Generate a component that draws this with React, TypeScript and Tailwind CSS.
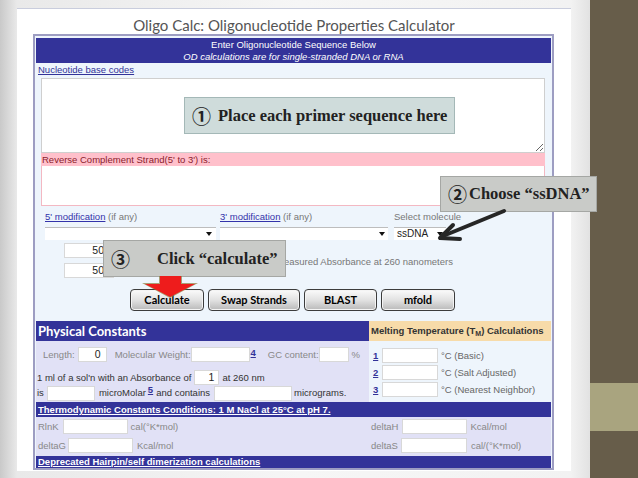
import React from "react";

function Field({ className = "", value = "" }: { className?: string; value?: string }) {
  return (
    <div
      className={
        "h-[15px] shrink-0 bg-white border border-[#d8d8d8] text-right pr-[4px] leading-[13px] text-[10.5px] text-[#222] " +
        className
      }
    >
      {value}
    </div>
  );
}

function Caret() {
  return (
    <svg width="6" height="4" viewBox="0 0 6 4" className="shrink-0">
      <path d="M0 0 L6 0 L3 4 Z" fill="#111" />
    </svg>
  );
}

function Btn({ label, className = "" }: { label: string; className?: string }) {
  return (
    <div
      className={
        "h-[22px] rounded-[4px] border border-[#3c3c3c] bg-[linear-gradient(to_bottom,#fbfbfb,#e2e2e2_50%,#b9b9b9)] shadow-[inset_0_0_0_1px_#f4f4f4] flex items-center justify-center font-['Lato',sans-serif] font-bold text-[11px] text-black " +
        className
      }
    >
      {label}
    </div>
  );
}

export default function App() {
  return (
    <div className="relative w-[638px] h-[478px] overflow-hidden flex font-['Liberation_Sans',Arial,sans-serif] text-[9.5px] leading-[12px]">
      {/* slide area */}
      <div className="w-[590px] h-full bg-[linear-gradient(to_right,#c9c9c9_0px,#e9e9e9_17px,#f6f6f6_300px,#f2f2f2_571px,#e2e2e2_590px)]">
        <div className="ml-[17px] mt-[8px] w-[554px] h-[463px] bg-white border-t border-[#c9cddd] overflow-hidden">
          <div className="h-[25px] pt-[8px] text-center text-[15px] leading-[17px] text-[#555] font-['Lato',sans-serif]">
            Oligo Calc: Oligonucleotide Properties Calculator
          </div>

          {/* form frame */}
          <div className="ml-[16px] w-[521px] border-2 border-[#9d9dc2] bg-[#eef5fc] px-[1px] pt-[2px]">
            <div className="h-[25px] bg-[#333399] text-white text-center pt-[1px]">
              <div className="leading-[12px]">Enter Oligonucleotide Sequence Below</div>
              <div className="leading-[12px] italic">OD calculations are for single-stranded DNA or RNA</div>
            </div>

            <div className="h-[14px] pt-[1px] pl-[2px]">
              <span className="text-[#333399] underline">Nucleotide base codes</span>
            </div>

            <textarea
              readOnly
              className="block mt-[1px] ml-[5px] w-[504px] h-[75px] bg-white border border-[#cfcfcf] outline-none"
            />
            <div className="ml-[5px] w-[504px] h-[13px] bg-[#ffc0cb] text-[#8b1c2c] pl-[1px] leading-[13px]">
              Reverse Complement Strand(5' to 3') is:
            </div>
            <div className="ml-[5px] w-[504px] h-[40px] bg-white border border-t-0 border-[#f3b8c2]" />

            {/* modifications */}
            <div className="mt-[5px] flex">
              <div className="ml-[9px] w-[175px] flex flex-col">
                <div className="h-[12px]">
                  <span className="text-[#3333aa] underline">5' modification</span>
                  <span className="text-[#777]"> (if any)</span>
                </div>
                <div className="mt-[4px] w-[171px] h-[13px] bg-white border-t border-[#bdbdbd] flex items-center justify-end pr-[4px]">
                  <Caret />
                </div>
              </div>
              <div className="w-[174px] flex flex-col">
                <div className="h-[12px]">
                  <span className="text-[#3333aa] underline">3' modification</span>
                  <span className="text-[#777]"> (if any)</span>
                </div>
                <div className="mt-[4px] w-[168px] h-[13px] bg-white border-t border-[#bdbdbd] flex items-center justify-end pr-[3px]">
                  <Caret />
                </div>
              </div>
              <div className="flex flex-col">
                <div className="h-[12px] text-[#777]">Select molecule</div>
                <div className="mt-[4px] w-[52px] h-[13px] bg-white border-t border-[#bdbdbd] flex items-center justify-between pl-[3px] pr-[3px] text-[10px] text-[#222]">
                  <span>ssDNA</span>
                  <Caret />
                </div>
              </div>
            </div>

            {/* concentration inputs */}
            <div className="mt-[3px] flex items-center">
              <div className="ml-[28px] flex flex-col gap-[5px]">
                <Field className="w-[50px] pr-[9px]" value="50" />
                <Field className="w-[50px] pr-[9px]" value="50" />
              </div>
              <div className="w-[162px] h-[35px]" />
              <div className="mt-[3px] text-[#777]">Measured Absorbance at 260 nanometers</div>
            </div>

            {/* buttons */}
            <div className="mt-[11px] mb-[10px] ml-[94px] flex gap-[4px]">
              <Btn label="Calculate" className="w-[74px]" />
              <Btn label="Swap Strands" className="w-[92px]" />
              <Btn label="BLAST" className="w-[73px]" />
              <Btn label="mfold" className="w-[74px]" />
            </div>

            {/* physical constants */}
            <div className="flex">
              <div className="w-[333px] bg-[#e1e1f6] pb-[1px]">
                <div className="h-[20px] bg-[#333399] text-white font-['Lato',sans-serif] font-bold text-[13px] leading-[20px] pl-[2px]">
                  Physical Constants
                </div>
                <div className="h-[25px] pt-[2px] flex items-center">
                  <span className="ml-[7px] text-[#888]">Length:</span>
                  <Field className="ml-[3px] w-[29px] pr-[5px]" value="0" />
                  <span className="ml-[8px] text-[#888]">Molecular Weight:</span>
                  <Field className="w-[59px]" />
                  <span className="ml-[1px] self-start mt-[4px] font-bold text-[#333399] underline">4</span>
                  <span className="ml-[12px] text-[#888]">GC content:</span>
                  <Field className="w-[30px]" />
                  <span className="ml-[3px] text-[#888]">%</span>
                </div>
                <div className="h-[19px] pt-[4px] flex items-center text-[#333]">
                  <span className="ml-[1px]">1 ml of a sol'n with an Absorbance of</span>
                  <Field className="ml-[3px] w-[25px] pr-[4px]" value="1" />
                  <span className="ml-[3px]">at 260 nm</span>
                </div>
                <div className="h-[16px] flex items-center text-[#333]">
                  <span className="ml-[1px]">is</span>
                  <Field className="ml-[3px] w-[48px]" />
                  <span className="ml-[4px]">microMolar</span>
                  <span className="ml-[2px] self-start -mt-[1px] font-bold text-[#333399] underline">5</span>
                  <span className="ml-[3px]">and contains</span>
                  <Field className="ml-[4px] w-[78px]" />
                  <span className="ml-[2px]">micrograms.</span>
                </div>
              </div>
              <div className="flex-1">
                <div className="h-[20px] bg-[#f7dba9] text-[#333] font-bold leading-[20px] pl-[2px]">
                  Melting Temperature (T<sub className="text-[7px]">M</sub>) Calculations
                </div>
                <div className="pt-[7px] pl-[4px] flex flex-col gap-[2px] text-[#666]">
                  <div className="h-[15px] flex items-center">
                    <span className="w-[9px] font-bold text-[#333399] underline">1</span>
                    <Field className="w-[56px]" />
                    <span className="ml-[3px]">°C (Basic)</span>
                  </div>
                  <div className="h-[15px] flex items-center">
                    <span className="w-[9px] font-bold text-[#333399] underline">2</span>
                    <Field className="w-[56px]" />
                    <span className="ml-[3px]">°C (Salt Adjusted)</span>
                  </div>
                  <div className="h-[15px] flex items-center">
                    <span className="w-[9px] font-bold text-[#333399] underline">3</span>
                    <Field className="w-[56px]" />
                    <span className="ml-[3px]">°C (Nearest Neighbor)</span>
                  </div>
                </div>
              </div>
            </div>

            <div className="h-[15px] bg-[#333399] text-white font-bold underline leading-[15px] pl-[2px]">
              Thermodynamic Constants Conditions: 1 M NaCl at 25°C at pH 7.
            </div>
            <div className="bg-[#e1e1f6] pt-[2px] pb-[3px] text-[#888]">
              <div className="h-[15px] flex items-center">
                <div className="w-[333px] flex items-center">
                  <span className="ml-[2px]">RlnK</span>
                  <Field className="ml-[4px] w-[65px]" />
                  <span className="ml-[3px]">cal(°K*mol)</span>
                </div>
                <div className="flex items-center">
                  <span className="ml-[2px]">deltaH</span>
                  <Field className="ml-[4px] w-[65px]" />
                  <span className="ml-[3px]">Kcal/mol</span>
                </div>
              </div>
              <div className="mt-[4px] h-[15px] flex items-center">
                <div className="w-[333px] flex items-center">
                  <span className="ml-[2px]">deltaG</span>
                  <Field className="ml-[2px] w-[65px]" />
                  <span className="ml-[4px]">Kcal/mol</span>
                </div>
                <div className="flex items-center">
                  <span className="ml-[2px]">deltaS</span>
                  <Field className="ml-[3px] w-[66px]" />
                  <span className="ml-[4px]">cal/(°K*mol)</span>
                </div>
              </div>
            </div>
            <div className="h-[12px] bg-[#333399] text-white font-bold underline leading-[12px] pl-[2px]">
              Deprecated Hairpin/self dimerization calculations
            </div>
          </div>
        </div>
      </div>

      {/* right decorative bar */}
      <div className="w-[48px] h-full bg-[#675d4a] pt-[383px]">
        <div className="h-[48px] bg-[#a9a47f]" />
      </div>

      {/* callout 1 */}
      <div className="absolute left-[184px] top-[97px] w-[271px] h-[37px] bg-[#cfdcdb] border border-[#a4b8b7] flex items-center pl-[7px] text-[#222] font-['Liberation_Serif',serif] font-bold text-[16.5px] leading-[20px]">
        <span className="font-['Noto_Sans_CJK_JP',sans-serif] font-bold text-[19px]">①</span>
        <span className="ml-[7px]">Place each primer sequence here</span>
      </div>

      {/* callout 2 */}
      <div className="absolute left-[440px] top-[176px] w-[157px] h-[36px] bg-[#c9cbc8] border border-[#a5a7a4] flex items-center pl-[7px] text-[#222] font-['Liberation_Serif',serif] font-bold text-[16.5px] leading-[20px]">
        <span className="font-['Noto_Sans_CJK_JP',sans-serif] font-bold text-[19px]">②</span>
        <span className="ml-[2px]">Choose “ssDNA”</span>
      </div>

      {/* callout 3 */}
      <div className="absolute left-[103px] top-[240px] w-[183px] h-[37px] bg-[#c9cbc8] border border-[#a5a7a4] flex items-center pl-[7px] text-[#222] font-['Liberation_Serif',serif] font-bold text-[16.5px] leading-[20px]">
        <span className="font-['Noto_Sans_CJK_JP',sans-serif] font-bold text-[19px]">③</span>
        <span className="ml-[27px]">Click “calculate”</span>
      </div>

      {/* red arrow */}
      <svg className="absolute left-[140px] top-[274px]" width="60" height="26" viewBox="0 0 60 26">
        <polygon points="19,2 42,2 42,9 58,9 30,24 2,9 19,9" fill="#8c7a3c" opacity="0.7" />
        <polygon points="20,2 41,2 41,10 55,10 30,23 5,10 20,10" fill="#ee1c1c" />
      </svg>

      {/* black arrow */}
      <svg className="absolute left-[430px] top-[205px]" width="85" height="40" viewBox="0 0 85 40">
        <line x1="74" y1="6" x2="13" y2="31" stroke="#262626" strokeWidth="4" strokeLinecap="round" />
        <polyline points="23,20 10,33 30,34" fill="none" stroke="#262626" strokeWidth="4" strokeLinecap="round" strokeLinejoin="round" />
      </svg>
    </div>
  );
}
